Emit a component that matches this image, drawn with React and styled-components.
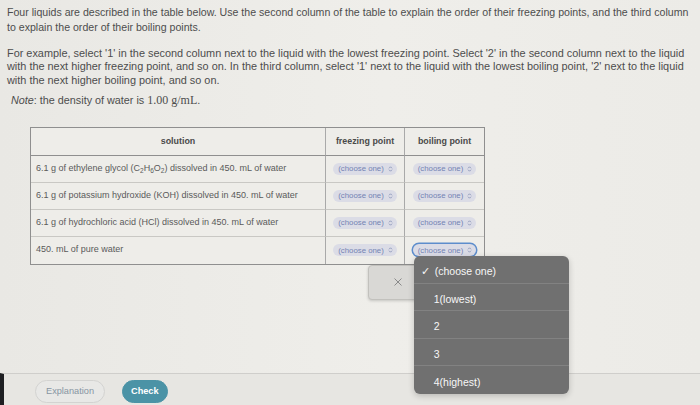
import React from "react";
import styled, { createGlobalStyle } from "styled-components";

const GlobalStyle = createGlobalStyle`
  html, body {
    margin: 0;
    padding: 0;
    background: #ebeae6;
  }
  body {
    font-family: "Liberation Sans", Arial, sans-serif;
    color: #4a4a4a;
  }
`;

const Page = styled.div`
  position: relative;
  width: 700px;
  height: 405px;
  overflow: hidden;
  display: flex;
  flex-direction: column;
  background: linear-gradient(90deg, #e9e8e4 0%, #efeeea 55%, #ecebe7 100%);
`;

const Main = styled.div`
  flex: 1;
  padding: 5px 0 0 7px;
`;

const Para = styled.p`
  margin: 0 0 ${(p) => p.gap}px 0;
  font-size: ${(p) => p.size}px;
  line-height: ${(p) => p.lh}px;
  white-space: nowrap;
  color: #4d4d4d;
`;

const Note = styled.p`
  margin: 0 0 0 4px;
  font-size: 10.8px;
  line-height: 13px;
  color: #4d4d4d;
  em {
    font-style: italic;
  }
`;

const Math = styled.span`
  font-family: "Liberation Serif", "Times New Roman", serif;
  font-size: 12px;
`;

const Table = styled.div`
  margin: 20px 0 0 23px;
  width: 453px;
  border: 1px solid #8f8f8f;
  display: grid;
  grid-template-columns: 295px 79px 79px;
  background: #eeede9;
`;

const Cell = styled.div`
  height: ${(p) => (p.head ? 28 : 27)}px;
  box-sizing: border-box;
  display: flex;
  align-items: center;
  justify-content: ${(p) => (p.left ? "flex-start" : "center")};
  padding-left: ${(p) => (p.left ? 5 : 0)}px;
  padding-bottom: ${(p) => (p.left ? 2 : 0)}px;
  border-right: ${(p) => (p.last ? "none" : "1px solid #a9a9a9")};
  border-bottom: ${(p) =>
    p.bottom ? "none" : p.head ? "1px solid #8f8f8f" : "1px solid #c9c8c4"};
  font-size: ${(p) => (p.head ? 8.9 : 9)}px;
  font-weight: ${(p) => (p.head ? 700 : 400)};
  color: ${(p) => (p.head ? "#4a4a4a" : "#5a5a5a")};
  white-space: pre;
`;

const Sub = styled.span`
  font-size: 6.5px;
  position: relative;
  top: 2px;
`;

const PillWrap = styled.div`
  position: relative;
`;

const Pill = styled.div`
  display: flex;
  align-items: center;
  gap: 4px;
  height: 12px;
  padding: 0 4px 0 5px;
  border-radius: 7px;
  background: #dbdce6;
  color: #7383b4;
  font-size: 7.8px;
  box-shadow: ${(p) => (p.focus ? "0 0 0 1.5px #5d8dcc" : "none")};
  white-space: nowrap;
`;

const Arrows = styled.svg`
  width: 5px;
  height: 6px;
  display: block;
`;

const ToolRow = styled.div`
  width: 455px;
  margin-left: 23px;
  display: flex;
  justify-content: flex-end;
`;

const ToolBox = styled.div`
  width: 117px;
  height: 35px;
  box-sizing: border-box;
  background: #d9d8d5;
  border: 1px solid #c2c1bd;
  border-radius: 4px;
  box-shadow: 0 1px 3px rgba(0, 0, 0, 0.18);
  display: flex;
  align-items: center;
  padding-left: 24px;
`;

const Menu = styled.div`
  position: absolute;
  top: 100%;
  left: 1px;
  width: 155px;
  background: #707070;
  border-radius: 6px;
  overflow: hidden;
  box-shadow: 0 2px 6px rgba(0, 0, 0, 0.2);
  z-index: 5;
`;

const MenuItem = styled.div`
  height: 27.5px;
  box-sizing: border-box;
  display: flex;
  align-items: center;
  padding-top: 3px;
  padding-left: ${(p) => (p.checked ? 7 : 20)}px;
  gap: 5px;
  color: #f7f7f7;
  font-family: "Liberation Sans", Arial, sans-serif;
  font-size: 10.5px;
  border-bottom: ${(p) => (p.last ? "none" : "1px solid #828282")};
`;

const Footer = styled.div`
  height: 32px;
  box-sizing: border-box;
  border-top: 1px solid #cfcecb;
  border-left: 4px solid #1e1f22;
  background: #e7e6e2;
  display: flex;
  align-items: center;
  gap: 17px;
  padding-left: 31px;
`;

const Button = styled.button`
  height: 23px;
  padding: 0 ${(p) => (p.primary ? 8 : 10)}px;
  border-radius: 12px;
  border: 1px solid ${(p) => (p.primary ? "#4b93a6" : "#d3d3d1")};
  background: ${(p) => (p.primary ? "#4b93a6" : "#e8e8e6")};
  color: ${(p) => (p.primary ? "#ffffff" : "#8795a2")};
  font-family: "Liberation Sans", Arial, sans-serif;
  font-size: 9.2px;
  font-weight: ${(p) => (p.primary ? 700 : 400)};
  margin-top: 3px;
`;

const rows = [
  <>6.1 g of ethylene glycol (C<Sub>2</Sub>H<Sub>6</Sub>O<Sub>2</Sub>) dissolved in 450. mL of water</>,
  <>6.1 g of potassium hydroxide (KOH) dissolved in 450. mL of water</>,
  <>6.1 g of hydrochloric acid (HCl) dissolved in 450. mL of water</>,
  <>450. mL of pure water</>,
];

const options = ["(choose one)", "1(lowest)", "2", "3", "4(highest)"];

function Choose({ focus, open }) {
  return (
    <PillWrap>
      <Pill focus={focus}>
        (choose one)
        <Arrows viewBox="0 0 5 6">
          <path d="M1 2.3 L2.5 0.8 L4 2.3 M1 3.7 L2.5 5.2 L4 3.7" fill="none" stroke="#7f8bb3" strokeWidth="0.8" />
        </Arrows>
      </Pill>
      {open && (
        <Menu>
          {options.map((o, i) => (
            <MenuItem key={o} checked={i === 0} last={i === options.length - 1}>
              {i === 0 && <span>✓</span>}
              {o}
            </MenuItem>
          ))}
        </Menu>
      )}
    </PillWrap>
  );
}

export default function App() {
  return (
    <Page>
      <GlobalStyle />
      <Main>
        <Para gap={12} lh={15} size={10.6}>
          Four liquids are described in the table below. Use the second column of the table to explain the order of their freezing points, and the third column
          <br />
          to explain the order of their boiling points.
        </Para>
        <Para gap={7} lh={13.3} size={10.9}>
          For example, select '1' in the second column next to the liquid with the lowest freezing point. Select '2' in the second column next to the liquid
          <br />
          with the next higher freezing point, and so on. In the third column, select '1' next to the liquid with the lowest boiling point, '2' next to the liquid
          <br />
          with the next higher boiling point, and so on.
        </Para>
        <Note>
          <em>Note</em>: the density of water is <Math>1.00 g/mL</Math>.
        </Note>

        <Table>
          <Cell head>solution</Cell>
          <Cell head>freezing point</Cell>
          <Cell head last>boiling point</Cell>
          {rows.map((r, i) => {
            const bottom = i === rows.length - 1;
            return (
              <React.Fragment key={i}>
                <Cell left bottom={bottom}><span>{r}</span></Cell>
                <Cell bottom={bottom}><Choose /></Cell>
                <Cell last bottom={bottom}><Choose focus={bottom} open={bottom} /></Cell>
              </React.Fragment>
            );
          })}
        </Table>
        <ToolRow>
          <ToolBox>
            <svg width="10" height="10" viewBox="0 0 10 10">
              <path d="M1.5 1.5 L8.5 8.5 M8.5 1.5 L1.5 8.5" stroke="#8a8a8a" strokeWidth="1" />
            </svg>
          </ToolBox>
        </ToolRow>
      </Main>
      <Footer>
        <Button>Explanation</Button>
        <Button primary>Check</Button>
      </Footer>
    </Page>
  );
}
